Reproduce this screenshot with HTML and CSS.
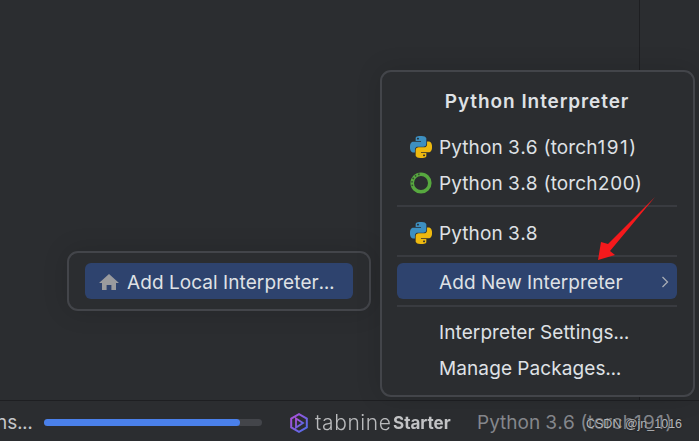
FILE: index.html
```html
<!DOCTYPE html>
<html lang="en">
<head>
<meta charset="utf-8">
<title>Python Interpreter</title>
<link rel="stylesheet" href="styles.css">
</head>
<body>
<svg class="defs" width="0" height="0">
  <symbol id="py" viewBox="0 0 24 24">
    <path fill="#3d8fc0" fill-rule="evenodd" d="M14.25.18l.9.2.73.26.59.3.45.32.34.34.25.34.16.33.1.3.04.26.02.2-.01.13V8.5l-.05.63-.13.55-.21.46-.26.38-.3.31-.33.25-.35.19-.35.14-.33.1-.3.07-.26.04-.21.02H8.77l-.69.05-.59.14-.5.22-.41.27-.33.32-.27.35-.2.36-.15.37-.1.35-.07.32-.04.27-.02.21v3.06H3.17l-.21-.03-.28-.07-.32-.12-.35-.18-.36-.26-.36-.36-.35-.46-.32-.59-.28-.73-.21-.88-.14-1.05-.05-1.23.06-1.22.16-1.04.24-.87.32-.71.36-.57.4-.44.42-.33.42-.24.4-.16.36-.1.32-.05.24-.01h.16l.06.01h8.16v-.83H6.18l-.01-2.75-.02-.37.05-.34.11-.31.17-.28.25-.26.31-.23.38-.2.44-.18.51-.15.58-.12.64-.1.71-.06.77-.04.84-.02 1.27.05zm-6.3 1.98l-.23.33-.08.41.08.41.23.34.33.22.41.09.41-.09.33-.22.23-.34.08-.41-.08-.41-.23-.33-.33-.22-.41-.09-.41.09z"/>
    <path fill="#eeb90f" fill-rule="evenodd" transform="rotate(180 12 12)" d="M14.25.18l.9.2.73.26.59.3.45.32.34.34.25.34.16.33.1.3.04.26.02.2-.01.13V8.5l-.05.63-.13.55-.21.46-.26.38-.3.31-.33.25-.35.19-.35.14-.33.1-.3.07-.26.04-.21.02H8.77l-.69.05-.59.14-.5.22-.41.27-.33.32-.27.35-.2.36-.15.37-.1.35-.07.32-.04.27-.02.21v3.06H3.17l-.21-.03-.28-.07-.32-.12-.35-.18-.36-.26-.36-.36-.35-.46-.32-.59-.28-.73-.21-.88-.14-1.05-.05-1.23.06-1.22.16-1.04.24-.87.32-.71.36-.57.4-.44.42-.33.42-.24.4-.16.36-.1.32-.05.24-.01h.16l.06.01h8.16v-.83H6.18l-.01-2.75-.02-.37.05-.34.11-.31.17-.28.25-.26.31-.23.38-.2.44-.18.51-.15.58-.12.64-.1.71-.06.77-.04.84-.02 1.27.05zm-6.3 1.98l-.23.33-.08.41.08.41.23.34.33.22.41.09.41-.09.33-.22.23-.34.08-.41-.08-.41-.23-.33-.33-.22-.41-.09-.41.09z"/>
  </symbol>
</svg>

<main class="workspace">
  <div class="editor"></div>
  <div class="side"></div>
</main>

<div class="popup popup-local">
  <div class="row row-active">
    <svg class="home" viewBox="0 0 20 16"><path d="M10 0 20 9h-3v7h-4.600v-5H7.600v5H3V9H0z"/></svg>
    <span>Add Local Interpreter...</span>
  </div>
</div>

<section class="popup popup-main">
  <h2 class="title">Python Interpreter</h2>
  <div class="row"><svg class="icon"><use href="#py"/></svg><span>Python 3.6 (torch<span class="plain-nums">191</span>)</span></div>
  <div class="row">
    <svg class="icon" viewBox="0 0 22 22">
      <circle class="ring" cx="11" cy="11" r="8.800"/>
      <path class="ring-gap" d="M2.500 14A9 9 0 0 1 11 2"/>
    </svg>
    <span>Python 3.8 (torch200)</span>
  </div>
  <hr class="sep sep-a">
  <div class="row"><svg class="icon"><use href="#py"/></svg><span>Python 3.8</span></div>
  <hr class="sep sep-b">
  <div class="row row-active">
    <span class="indent">Add New Interpreter</span>
    <svg class="chev" viewBox="0 0 8 12"><path d="M1.500 1 6.500 6 1.500 11"/></svg>
  </div>
  <hr class="sep sep-c">
  <div class="row"><span class="indent">Interpreter Settings...</span></div>
  <div class="row"><span class="indent">Manage Packages...</span></div>
</section>

<footer class="status">
  <span class="task">ns...</span>
  <div class="progress"><div class="progress-fill" style="width:90%"></div></div>
  <div class="brand">
    <svg class="brand-logo" viewBox="0 0 18 20">
      <defs><linearGradient id="tn" x1="0" y1="0" x2="1" y2="1"><stop offset="0" stop-color="#b04fd8"/><stop offset="1" stop-color="#4d6fe8"/></linearGradient></defs>
      <path fill="none" stroke="url(#tn)" stroke-width="2" d="M9 1.200 16.800 5.600v8.800L9 18.800 1.200 14.400V5.600z"/>
      <path fill="none" stroke="url(#tn)" stroke-width="1.800" d="M6 5.500 13 10 6 14.500z"/>
    </svg>
    <span class="brand-name">tabnine</span>
    <span class="brand-plan">Starter</span>
  </div>
  <span class="interpreter">Python 3.6 (torch<span class="plain-nums">191</span>)</span>
</footer>

<span class="watermark">CSDN @jn_1016</span>

<svg class="arrow" viewBox="0 0 699 441"><polygon points="655,197 608,244 601,242 598,260 615,255 610,251"/></svg>
</body>
</html>
```

FILE: styles.css
```css
* { box-sizing: border-box; }

html, body {
  margin: 0;
  height: 100%;
}

body {
  position: relative;
  display: flex;
  flex-direction: column;
  width: 699px;
  height: 441px;
  overflow: hidden;
  background: #2b2d30;
  color: #dfe1e5;
  font-family: Inter, "Noto Sans", sans-serif;
  font-size: 19px;
  font-variant-numeric: tabular-nums;
}

.plain-nums {
  font-variant-numeric: normal;
  letter-spacing: 1.400px;
}

.defs { position: absolute; }

.workspace {
  flex: 1;
  display: flex;
}

.editor { width: 639px; }

.side {
  flex: 1;
  border-left: 1px solid #1e1f22;
}

.popup {
  position: absolute;
  background: #2b2d30;
  border: 2px solid #43454a;
  border-radius: 11px;
  box-shadow: 0 0 26px rgba(0, 0, 0, 0.14);
}

.popup-local {
  left: 67px;
  top: 251px;
  width: 304px;
  height: 60px;
  padding: 10px 16px;
}

.popup-main {
  left: 380px;
  top: 70px;
  width: 315px;
  height: 327px;
  padding: 0 16px 0 15px;
}

.title {
  margin: 0;
  padding-top: 19px;
  height: 57px;
  text-align: center;
  font-size: 19px;
  line-height: 22px;
  font-weight: 600;
  letter-spacing: 0.9px;
}

.row {
  display: flex;
  align-items: center;
  height: 36px;
  padding-left: 13px;
  white-space: nowrap;
  letter-spacing: 0.1px;
  border-radius: 6px;
}

.row-active {
  padding-top: 2px;
  background: #2e436e;
}

.popup-local .row { padding-left: 14px; }

.icon {
  flex: none;
  width: 22px;
  height: 22px;
  margin-right: 7px;
}

.ring {
  fill: none;
  stroke: #57a83f;
  stroke-width: 3.600;
}

.ring-gap {
  fill: none;
  stroke: #2b2d30;
  stroke-width: 1.600;
  stroke-dasharray: 1.500 2;
  opacity: 0.75;
}

.home {
  flex: none;
  width: 20px;
  height: 16px;
  margin-right: 8px;
  fill: #9a9b9e;
}

.indent { margin-left: 29px; }

.chev {
  flex: none;
  width: 8px;
  height: 12px;
  margin-left: auto;
  margin-right: 8px;
  fill: none;
  stroke: #a8adb5;
  stroke-width: 1.300;
}

.sep {
  height: 2px;
  margin: 0;
  border: 0;
  background: #393b40;
}

.sep-a { margin: 4px 0 8px; }
.sep-b { margin: 4px 0 6px; }
.sep-c { margin: 6px 0 7px; }

.status {
  flex: none;
  display: flex;
  align-items: center;
  height: 41px;
  padding-top: 2px;
  border-top: 1px solid #1e1f22;
  white-space: nowrap;
}

.task {
  margin-left: -4px;
  width: 48px;
  color: #c4c6ca;
}

.progress {
  width: 218px;
  height: 7px;
  border-radius: 4px;
  background: #43454a;
}

.progress-fill {
  height: 100%;
  border-radius: 4px;
  background: #4a80ea;
}

.brand {
  display: flex;
  align-items: center;
  margin-left: 28px;
  width: 187px;
  padding-top: 1px;
  filter: blur(0.4px);
}

.brand-logo {
  flex: none;
  width: 18px;
  height: 20px;
  margin-right: 7px;
}

.brand-name {
  width: 78px;
  font-size: 21px;
  font-weight: 300;
  letter-spacing: 0.6px;
  color: #b9babc;
}

.brand-plan {
  font-size: 17px;
  font-weight: 700;
  color: #c2c3c5;
}

.interpreter {
  color: #85878c;
}

.watermark {
  position: absolute;
  left: 586px;
  top: 417px;
  font-family: "Liberation Sans", sans-serif;
  font-size: 12.500px;
  color: #b4b6b9;
  text-shadow: 0 0 2px #1c1d1f;
}

.arrow {
  position: absolute;
  inset: 0;
  width: 699px;
  height: 441px;
  pointer-events: none;
  fill: #f5191c;
}
```
